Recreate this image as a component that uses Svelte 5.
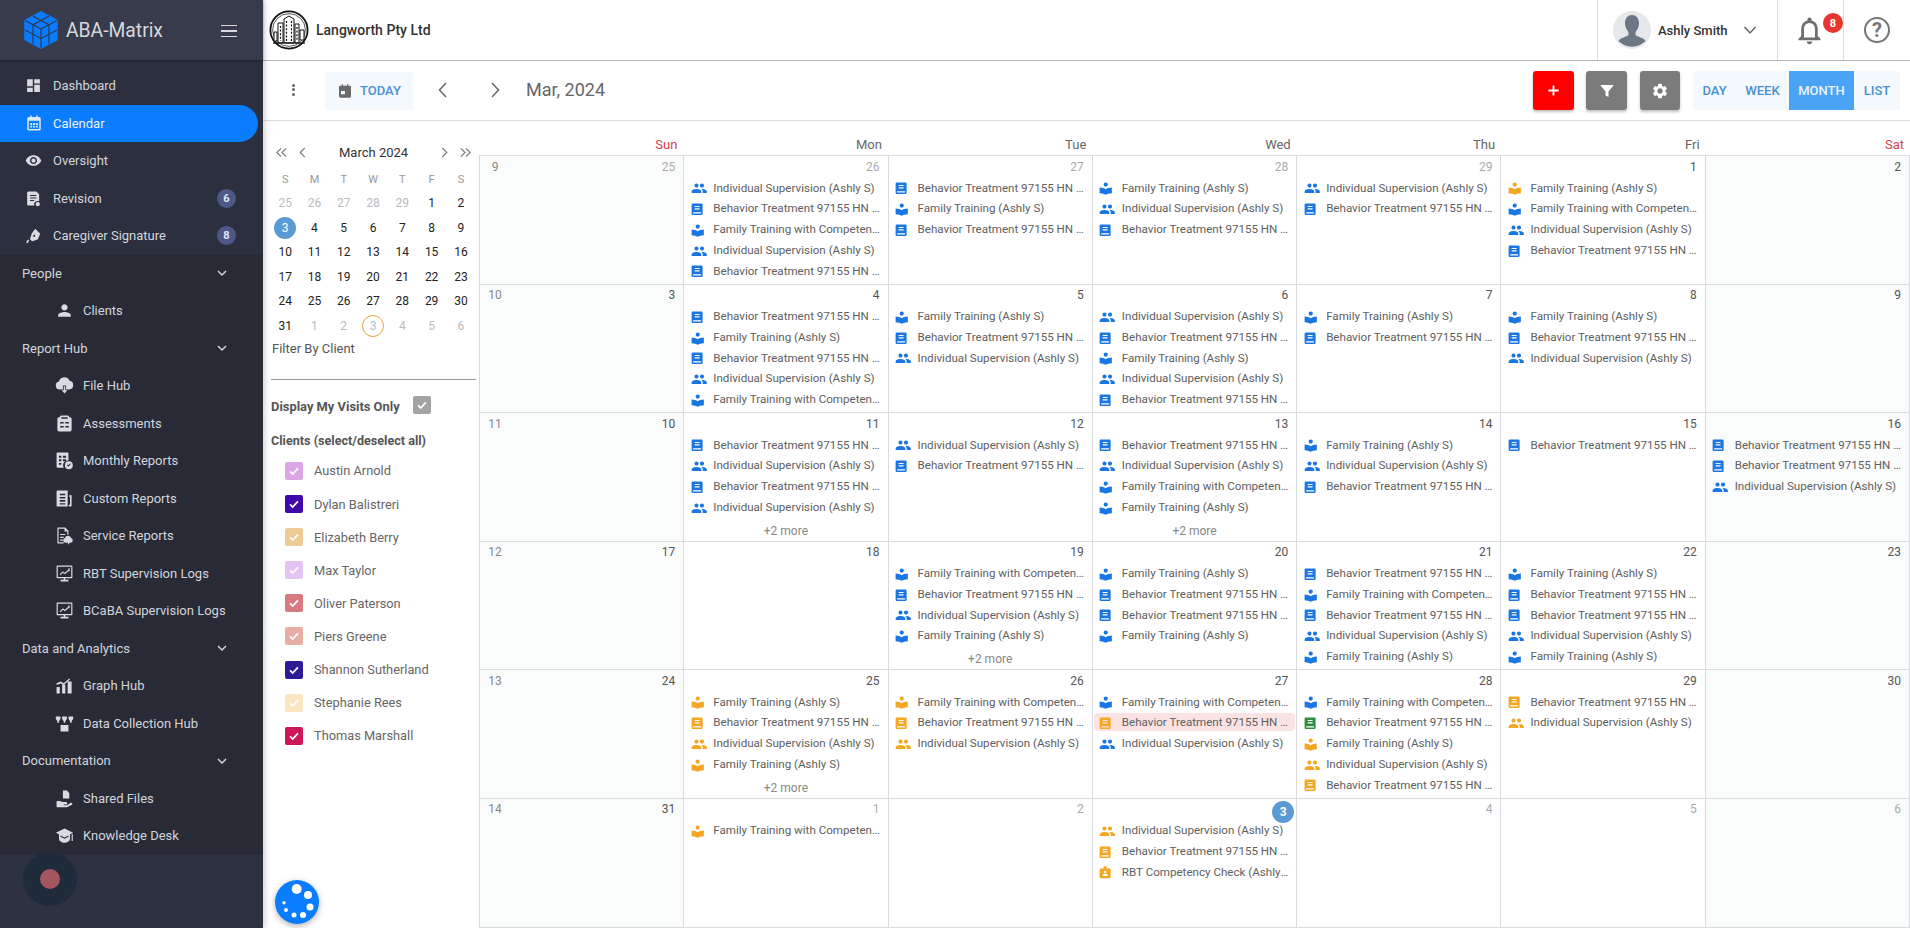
<script>
  const ic = {
    dash: "M3 13h8V3H3v10zm0 8h8v-6H3v6zm10 0h8V11h-8v10zm0-18v6h8V3h-8z",
    cal: "M7 2h2v2h6V2h2v2h2a2 2 0 0 1 2 2v14a2 2 0 0 1-2 2H5a2 2 0 0 1-2-2V6a2 2 0 0 1 2-2h2V2zM5 9v11h14V9H5zm2 3h2.5v2.5H7V12zm3.75 0h2.5v2.5h-2.5V12zm3.75 0H17v2.5h-2.5V12zM7 15.5h2.5V18H7v-2.5zm3.75 0h2.5V18h-2.5v-2.5zm3.75 0H17V18h-2.5v-2.5z",
    today: "M7 2h2v2h6V2h2v2h2a2 2 0 0 1 2 2v14a2 2 0 0 1-2 2H5a2 2 0 0 1-2-2V6a2 2 0 0 1 2-2h2V2zM6 12v5h6v-5H6z",
    eye: "M12 4.5C7 4.5 2.73 7.61 1 12c1.73 4.39 6 7.5 11 7.5s9.27-3.11 11-7.5c-1.73-4.39-6-7.5-11-7.5zM12 17c-2.76 0-5-2.24-5-5s2.24-5 5-5 5 2.24 5 5-2.24 5-5 5zm0-8c-1.66 0-3 1.34-3 3s1.34 3 3 3 3-1.34 3-3-1.34-3-3-3z",
    rev: "M5 2h11l4 4v10a5 5 0 0 0-7 6H5a2 2 0 0 1-2-2V4a2 2 0 0 1 2-2zm2 5v1.5h9V7H7zm0 3.5V12h9v-1.5H7zM7 14v1.5h6V14H7zM18 17a3 3 0 1 1 0 6 3 3 0 0 1 0-6z",
    sign: "M14.500 2.500l7 7-3.500 8-8 2.500-3-3 2.500-8 5-6.500zM13 11a1.500 1.500 0 1 0 .01 3 1.500 1.500 0 0 0-.01-3zM2 22.500c0-2.500 1-3.800 3.200-4.800l1 1c-1.200 1-1.700 1.800-1.700 3.800H2z",
    person: "M12 12c2.21 0 4-1.79 4-4s-1.79-4-4-4-4 1.79-4 4 1.79 4 4 4zm0 2c-2.67 0-8 1.34-8 4v2h16v-2c0-2.66-5.33-4-8-4z",
    cloud: "M6 17a5 5 0 0 1-1-9.9 7 7 0 0 1 13.4-1A5.5 5.5 0 0 1 18 17h-4v-5h-4v5H6zM12 22l-3.5-4H11v-5h2v5h2.5L12 22z",
    clip: "M8 2h8a2 2 0 0 1 2 2h1a2 2 0 0 1 2 2v14a2 2 0 0 1-2 2H5a2 2 0 0 1-2-2V6a2 2 0 0 1 2-2h1a2 2 0 0 1 2-2zm0 2v2h8V4H8zM6.5 10v2H11v-2H6.5zm6.5 0v2h4.5v-2H13zM6.5 15v2H11v-2H6.5zm6.5 0v2h4.5v-2H13z",
    month: "M3 2h13a1 1 0 0 1 1 1v9a6 6 0 0 0-6 9H3a1 1 0 0 1-1-1V3a1 1 0 0 1 1-1zm2 4v2.5h3V6H5zm5 0v2.5h4V6h-4zM5 10.5V13h3v-2.5H5zm5 0V13h4v-2.5h-4zM5 15v2.5h3V15H5zM17.5 13a5 5 0 1 1 0 10 5 5 0 0 1 0-10zm-2.5 5 2 2 3-3.5-1-.8-2 2.4-1-1-1 .9z",
    custom: "M3 2h13v20H3a1 1 0 0 1-1-1V3a1 1 0 0 1 1-1zm3 4v2h7V6H6zm0 4v2h7v-2H6zm0 4v2h7v-2H6zm0 4v1.5h7V18H6zM18 8h3v13a1 1 0 0 1-1 1h-2.5V20H19V10h-1V8z",
    service: "M4 2h9l4 4v5h-1.5V7H12V3.5H4.5v17H11V22H4a1 1 0 0 1-1-1V3a1 1 0 0 1 1-1zm2.5 8H13v1.5H6.5V10zm0 3.5H11V15H6.5v-1.5zm0 3.5H10v1.5H6.5V17zM17 12.5a3.5 3.5 0 0 1 3.4 2.7A3 3 0 0 1 20 21h-2v2h-1.5v-2H13a3 3 0 0 1-.4-5.9 4 4 0 0 1 4.4-2.6z",
    monitor: "M3 2h18a1 1 0 0 1 1 1v14a1 1 0 0 1-1 1h-8v2h4v2H7v-2h4v-2H3a1 1 0 0 1-1-1V3a1 1 0 0 1 1-1zm.5 1.5v13h17v-13h-17zM6 13l4-4 2.5 2L17 7v-1.5h1.5V9H16.8l-4.2 4-2.5-2-3.3 3.2L6 13z",
    graph: "M2 14h4v8H2v-8zm7-3h4v11H9V11zm7-4h5v15h-5V7zM2 9l5-2 4 2 7-6 1 1.5-8 7-4-2-5 2V9z",
    funnel: "M1 3h6v3L5 9v2H3V9L1 6V3zm8 0h6v3l-2 3v2h-2V9L9 6V3zm8 0h6v3l-2 3v2h-2V9l-2-3V3zM7 14h10v8H7v-8z",
    hand: "M10 2h5l3 3v7h-8V2zM2 15h4l4 1.5h4a1.5 1.5 0 0 1 0 3h-3v1h4l5-3a1.5 1.5 0 0 1 1.5 2.5L15 23H2v-8z",
    cap: "M12 3l11 5.5-4 2V16c0 3-3.5 5-7 5s-7-2-7-5v-5.5L1 8.5 12 3zm-5 9v1.5L12 16l5-2.5V12l-5 2.5L7 12zM21 10.5h1.5V19H21z",
    I: "M16 11c1.66 0 2.99-1.34 2.99-3S17.66 5 16 5c-1.66 0-3 1.34-3 3s1.34 3 3 3zm-8 0c1.66 0 2.99-1.34 2.99-3S9.66 5 8 5C6.34 5 5 6.34 5 8s1.34 3 3 3zm0 2c-2.33 0-7 1.17-7 3.5V19h14v-2.5c0-2.33-4.67-3.5-7-3.5zm8 0c-.29 0-.62.02-.97.05 1.16.84 1.97 1.97 1.97 3.45V19h6v-2.5c0-2.33-4.67-3.5-7-3.5z",
    B: "M5 2.500h14a2 2 0 0 1 2 2v15a2 2 0 0 1-2 2H5a2 2 0 0 1-2-2v-15a2 2 0 0 1 2-2zm3 4v2h8v-2H8zm0 4v2h8v-2H8zM5.500 17v2h13v-2h-13z",
    F: "M12 13C9.600 11.400 6.300 10.300 2 10.200V19.500c4.300.1 7.600 1 10 2.500 2.400-1.500 5.700-2.400 10-2.500v-9.300c-4.300.1-7.600 1.200-10 2.800zM12 9a3.500 3.500 0 1 0 0-7 3.500 3.500 0 0 0 0 7z",
    R: "M9.5 2h5v4H19a2 2 0 0 1 2 2v12a2 2 0 0 1-2 2H5a2 2 0 0 1-2-2V8a2 2 0 0 1 2-2h4.5V2zM12 9.5a2 2 0 1 0 0 4 2 2 0 0 0 0-4zM8 15v3h8v-3H8z",
    filter: "M3 4h18l-7 8.5V20l-4-2v-5.5L3 4z",
    gear: "M19.14 12.94c.04-.3.06-.61.06-.94 0-.32-.02-.64-.07-.94l2.03-1.58c.18-.14.23-.41.12-.61l-1.92-3.32c-.12-.22-.37-.29-.59-.22l-2.39.96c-.5-.38-1.03-.7-1.62-.94l-.36-2.54c-.04-.24-.24-.41-.48-.41h-3.84c-.24 0-.43.17-.47.41l-.36 2.54c-.59.24-1.13.57-1.62.94l-2.39-.96c-.22-.08-.47 0-.59.22L2.74 8.87c-.12.21-.08.47.12.61l2.03 1.58c-.05.3-.09.63-.09.94s.02.64.07.94l-2.03 1.58c-.18.14-.23.41-.12.61l1.92 3.32c.12.22.37.29.59.22l2.39-.96c.5.38 1.03.7 1.62.94l.36 2.54c.05.24.24.41.48.41h3.84c.24 0 .44-.17.47-.41l.36-2.54c.59-.24 1.13-.56 1.62-.94l2.39.96c.22.08.47 0 .59-.22l1.92-3.32c.12-.22.07-.47-.12-.61l-2.01-1.58zM12 15.6c-1.98 0-3.6-1.62-3.6-3.6s1.62-3.6 3.6-3.6 3.6 1.62 3.6 3.6-1.62 3.6-3.6 3.6z",
    bell: "M12 22c1.1 0 2-.9 2-2h-4c0 1.1.9 2 2 2zm6-6v-5c0-3.07-1.63-5.64-4.5-6.32V4c0-.83-.67-1.5-1.5-1.5s-1.5.67-1.5 1.5v.68C7.64 5.36 6 7.92 6 11v5l-2 2v1h16v-1l-2-2zm-2 1H8v-6c0-2.48 1.51-4.5 4-4.5s4 2.02 4 4.5v6z"
  };

  const nav = [
    { t: "item", label: "Dashboard", icon: "dash" },
    { t: "item", label: "Calendar", icon: "cal", active: true },
    { t: "item", label: "Oversight", icon: "eye" },
    { t: "item", label: "Revision", icon: "rev", badge: 6 },
    { t: "item", label: "Caregiver Signature", icon: "sign", badge: 8 }
  ];
  const nav2 = [
    { t: "group", label: "People" },
    { t: "sub", label: "Clients", icon: "person" },
    { t: "group", label: "Report Hub" },
    { t: "sub", label: "File Hub", icon: "cloud" },
    { t: "sub", label: "Assessments", icon: "clip" },
    { t: "sub", label: "Monthly Reports", icon: "month" },
    { t: "sub", label: "Custom Reports", icon: "custom" },
    { t: "sub", label: "Service Reports", icon: "service" },
    { t: "sub", label: "RBT Supervision Logs", icon: "monitor" },
    { t: "sub", label: "BCaBA Supervision Logs", icon: "monitor" },
    { t: "group", label: "Data and Analytics" },
    { t: "sub", label: "Graph Hub", icon: "graph" },
    { t: "sub", label: "Data Collection Hub", icon: "funnel" },
    { t: "group", label: "Documentation" },
    { t: "sub", label: "Shared Files", icon: "hand" },
    { t: "sub", label: "Knowledge Desk", icon: "cap" }
  ];

  const miniDays = [
    ["25", "26", "27", "28", "29", "1", "2"],
    ["3", "4", "5", "6", "7", "8", "9"],
    ["10", "11", "12", "13", "14", "15", "16"],
    ["17", "18", "19", "20", "21", "22", "23"],
    ["24", "25", "26", "27", "28", "29", "30"],
    ["31", "1", "2", "3", "4", "5", "6"]
  ].flatMap((row, r) =>
    row.map((d, c) => ({
      d,
      muted: (r === 0 && c < 5) || (r === 5 && c > 0),
      today: r === 1 && c === 0,
      ring: r === 5 && c === 3
    }))
  );

  const clients = [
    ["Austin Arnold", "#dba6e4"],
    ["Dylan Balistreri", "#3f08a8"],
    ["Elizabeth Berry", "#eecb94"],
    ["Max Taylor", "#e4c4f3"],
    ["Oliver Paterson", "#d97a82"],
    ["Piers Greene", "#e8aea4"],
    ["Shannon Sutherland", "#2d1a96"],
    ["Stephanie Rees", "#fbe6c4"],
    ["Thomas Marshall", "#cf1657"]
  ];

  const titles = {
    I: "Individual Supervision (Ashly S)",
    B: "Behavior Treatment 97155 HN (Ashly S)",
    F: "Family Training (Ashly S)",
    C: "Family Training with Competency Check (Ashly S)",
    R: "RBT Competency Check (Ashly S)"
  };
  const tone = { o: "#f5a623", g: "#2e8b3f" };
  const boxes = { I: "0 0 24 24", B: "2 -1.500 27 27", F: "1 -2 27 27", R: "2 -1.500 27 27" };

  function ev(code) {
    const k = code[0];
    const icon = k === "C" ? "F" : k;
    return {
      icon,
      box: boxes[icon],
      title: titles[k],
      color: tone[code[1]] || "#1a76e3",
      hl: code[2] === "h"
    };
  }

  const weekNums = [9, 10, 11, 12, 13, 14];
  const raw = [
    [["25", 1, ""], ["26", 1, "I B C I B"], ["27", 1, "B F B"], ["28", 1, "F I B"], ["29", 1, "I B"], ["1", 0, "Fo C I B"], ["2", 0, ""]],
    [["3", 0, ""], ["4", 0, "B F B I C"], ["5", 0, "F B I"], ["6", 0, "I B F I B"], ["7", 0, "F B"], ["8", 0, "F B I"], ["9", 0, ""]],
    [["10", 0, ""], ["11", 0, "B I B I", 2], ["12", 0, "I B"], ["13", 0, "B I C F", 2], ["14", 0, "F I B"], ["15", 0, "B"], ["16", 0, "B B I"]],
    [["17", 0, ""], ["18", 0, ""], ["19", 0, "C B I F", 2], ["20", 0, "F B B F"], ["21", 0, "B C B I F"], ["22", 0, "F B B I F"], ["23", 0, ""]],
    [["24", 0, ""], ["25", 0, "Fo Bo Io Fo", 2], ["26", 0, "Co Bo Io"], ["27", 0, "C Boh I"], ["28", 0, "C Bg Fo Io Bo"], ["29", 0, "Bo Io"], ["30", 0, ""]],
    [["31", 0, ""], ["1", 1, "Co"], ["2", 1, ""], ["3", 2, "Io Bo Ro"], ["4", 1, ""], ["5", 1, ""], ["6", 1, ""]]
  ];
  const cells = raw.flatMap((row, r) =>
    row.map((c, i) => ({
      d: c[0],
      muted: c[1] === 1,
      today: c[1] === 2,
      week: i === 0 ? weekNums[r] : null,
      weekend: i === 0 || i === 6,
      events: c[2] ? c[2].split(" ").map(ev) : [],
      more: c[3] || 0
    }))
  );
  const heads = ["Sun", "Mon", "Tue", "Wed", "Thu", "Fri", "Sat"];
</script>

<div class="app">
  <aside class="side">
    <div class="brand">
      <svg class="cube" viewBox="0 0 34 38" aria-hidden="true">
        <path d="M17 1l16 8.5v19L17 37 1 28.5v-19z" fill="#0a7cff" stroke="#0a7cff" stroke-width="1.5" stroke-linejoin="round" />
        <path d="M9 5.25l16 8.5M25 5.25l-16 8.5M1 9.5L17 18l16-8.5M17 18v19M1 19l16 8.5L33 19M9 13.75v19M25 13.75v19" fill="none" stroke="#2f3445" stroke-width="1.1" />
      </svg>
      <span class="brandname">ABA-Matrix</span>
      <span class="burger"><i></i><i></i><i></i></span>
    </div>
    <nav class="nav">
      {#each nav as n}
        <div class="row item" class:active={n.active}>
          <svg class="nicon" viewBox="0 0 24 24"><path d={ic[n.icon]} fill-rule="evenodd" /></svg>
          <span class="lbl">{n.label}</span>
          {#if n.badge}<span class="nbadge">{n.badge}</span>{/if}
        </div>
      {/each}
      <div class="dark">
        {#each nav2 as n}
          {#if n.t === "group"}
            <div class="row group">
              <span class="lbl">{n.label}</span>
              <svg class="gchev" viewBox="0 0 12 12"><path d="M2 4l4 4 4-4" /></svg>
            </div>
          {:else}
            <div class="row sub">
              <svg class="nicon" viewBox="0 0 24 24"><path d={ic[n.icon]} fill-rule="evenodd" /></svg>
              <span class="lbl">{n.label}</span>
            </div>
          {/if}
        {/each}
      </div>
    </nav>
  </aside>

  <div class="main">
    <header class="top">
      <svg class="orglogo" viewBox="0 0 40 40" aria-hidden="true">
        <circle cx="20" cy="20" r="18.6" fill="#fff" stroke="#111" stroke-width="1.8" />
        <circle cx="20" cy="20" r="16.4" fill="none" stroke="#111" stroke-width=".7" />
        <path d="M15 9l5-3 5 3v24H15zM9 13h5v20H9zM26 14h4v19h-4zM5 22h3v9H5zM31 20h4v10h-4z" fill="#fff" stroke="#111" stroke-width="1" />
        <path d="M17.5 11v20M22.5 11v20M11.5 16v15M28 17v14" fill="none" stroke="#111" stroke-width="1.2" stroke-dasharray="2 1.6" />
        <path d="M4 33h32" stroke="#111" stroke-width="1.2" />
      </svg>
      <span class="org">Langworth Pty Ltd</span>
      <div class="tblock user">
        <svg class="avatar" viewBox="0 0 38 38" aria-hidden="true">
          <circle cx="19" cy="19" r="19" fill="#e6e8eb" />
          <path d="M12 12c0-5 3-8 7-8s7 3 7 8c0 4-1.5 7-3.5 9v3c2 2 8 2.500 10 6a19 19 0 0 1-27 0c2-3.500 8-4 10-6v-3c-2-2-3.500-5-3.500-9z" fill="#6c7684" />
        </svg>
        <span class="uname">Ashly Smith</span>
        <svg class="uchev" viewBox="0 0 14 14"><path d="M1.500 4l5.500 6 5.500-6" /></svg>
      </div>
      <div class="tblock bell">
        <svg viewBox="0 0 24 24"><path d={ic.bell} /></svg>
        <span class="bbadge">8</span>
      </div>
      <div class="tblock help"><span class="q">?</span></div>
    </header>

    <div class="toolbar">
      <span class="dots"><i></i><i></i><i></i></span>
      <button class="todaybtn">
        <svg viewBox="0 0 24 24"><path d={ic.today} fill-rule="evenodd" /></svg>
        TODAY
      </button>
      <svg class="tchev prev" viewBox="0 0 14 20"><path d="M10 3L3.500 10l6.500 7" /></svg>
      <svg class="tchev next" viewBox="0 0 14 20"><path d="M4 3l6.500 7L4 17" /></svg>
      <span class="title">Mar, 2024</span>
      <button class="sq red"><svg viewBox="0 0 14 14"><path d="M7 1.500v11M1.500 7h11" /></svg></button>
      <button class="sq gray g1"><svg viewBox="0 0 24 24" class="solid"><path d={ic.filter} /></svg></button>
      <button class="sq gray g2"><svg viewBox="0 0 24 24" class="solid"><path d={ic.gear} /></svg></button>
      <div class="seg">
        <span class="s1">DAY</span><span class="s2">WEEK</span><span class="s3">MONTH</span><span class="s4">LIST</span>
      </div>
    </div>

    <div class="body">
      <section class="panel">
        <div class="mhead">
          <svg viewBox="0 0 14 14" class="m1"><path d="M6.500 2.500L2 7l4.500 4.500M12 2.500L7.500 7l4.500 4.500" /></svg>
          <svg viewBox="0 0 14 14" class="m2"><path d="M9.500 2L4.500 7l5 5" /></svg>
          <span class="mtitle">March 2024</span>
          <svg viewBox="0 0 14 14" class="m3"><path d="M4.500 2l5 5-5 5" /></svg>
          <svg viewBox="0 0 14 14" class="m4"><path d="M2 2.500L6.500 7 2 11.500M7.500 2.500L12 7l-4.500 4.500" /></svg>
        </div>
        <div class="mgrid">
          {#each ["S", "M", "T", "W", "T", "F", "S"] as h}<span class="mwd">{h}</span>{/each}
          {#each miniDays as m}
            <span class="md" class:mmuted={m.muted} class:mtoday={m.today} class:mring={m.ring}>{m.d}</span>
          {/each}
        </div>
        <div class="fbc">Filter By Client</div>
        <hr class="rule" />
        <div class="mine">
          <span>Display My Visits Only</span>
          <span class="cb minecb"><svg viewBox="0 0 16 16"><path d="M3.500 8.500l3 3 6-6.500" /></svg></span>
        </div>
        <div class="clhead">Clients (select/deselect all)</div>
        <div class="cllist">
          {#each clients as c}
            <div class="cl">
              <span class="cb" style="background:{c[1]}"><svg viewBox="0 0 16 16"><path d="M3.500 8.500l3 3 6-6.500" /></svg></span>
              <span>{c[0]}</span>
            </div>
          {/each}
        </div>
      </section>

      <section class="cal">
        <div class="wdhead">
          {#each heads as h, i}<span class:wk={i === 0 || i === 6}>{h}</span>{/each}
        </div>
        <div class="grid">
          {#each cells as c}
            <div class="cell" class:weekend={c.weekend}>
              <div class="ctop">
                {#if c.week}<span class="wnum">{c.week}</span>{/if}
                <span class="dnum" class:dmuted={c.muted} class:dtoday={c.today}>{c.d}</span>
              </div>
              {#each c.events as e}
                <div class="ev" class:hl={e.hl}>
                  <svg viewBox={e.box} style="fill:{e.color}"><path d={ic[e.icon]} fill-rule="evenodd" /></svg>
                  <span class="evt">{e.title}</span>
                </div>
              {/each}
              {#if c.more}<div class="more">+{c.more} more</div>{/if}
            </div>
          {/each}
        </div>
      </section>
    </div>
  </div>

  <div class="foot"></div>
  <div class="rec"><i></i></div>
  <svg class="loader" viewBox="0 0 44 44" aria-hidden="true">
    <circle cx="22" cy="22" r="22" fill="#0a7cff" />
    <g fill="#fff">
      <circle cx="21.700" cy="9" r="5" /><circle cx="33" cy="15" r="4" /><circle cx="35" cy="27" r="3.500" />
      <circle cx="28" cy="35" r="3" /><circle cx="19" cy="35" r="2.500" /><circle cx="11" cy="30" r="2" /><circle cx="9" cy="22.700" r="1.700" />
    </g>
  </svg>
</div>

<style>
  :global(body) { margin: 0; font-family: Roboto, "Liberation Sans", sans-serif; background: #fff; }
  .app { position: relative; display: flex; width: 1910px; height: 928px; overflow: hidden; font-size: 13px; }
  svg { display: block; flex: none; }

  /* sidebar */
  .side { width: 263px; flex: none; background: #2c2f3d; box-shadow: 2px 0 6px rgba(0, 0, 0, .18); z-index: 3; display: flex; flex-direction: column; }
  .brand { height: 60px; flex: none; background: #383b4b; display: flex; align-items: center; padding-left: 24px; box-sizing: border-box; box-shadow: 0 1px 2px rgba(0, 0, 0, .35); }
  .cube { width: 34px; height: 38px; }
  .brandname { margin-left: 8px; font-size: 19.300px; color: #d6d8de; width: 155px; flex: none; white-space: nowrap; }
  .burger { display: flex; flex-direction: column; gap: 4px; width: 16px; margin-top: 2px; }
  .burger i { display: block; height: 1.500px; background: #d6d8de; }
  .nav { padding-top: 7px; flex: 1; display: flex; flex-direction: column; }
  .row { height: 37.500px; display: flex; align-items: center; color: #d3d5dc; box-sizing: border-box; }
  .nicon { fill: #d9dbe1; width: 17px; height: 17px; }
  .item { padding-left: 25px; width: 258px; }
  .item .lbl { margin-left: 11px; }
  .item.active { background: #0a7cff; color: #e9f2ff; border-radius: 0 19px 19px 0; }
  .item.active .nicon { width: 18px; height: 18px; fill: #dcebff; margin-right: -1px; }
  .nbadge { margin-left: auto; margin-right: 22px; width: 19px; height: 19px; border-radius: 50%; background: #4d5889; color: #e4e7f2; font-size: 11px; font-weight: 700; display: flex; align-items: center; justify-content: center; }
  .dark { background: #282b36; flex: none; }
  .group { padding-left: 22px; }
  .gchev { margin-left: auto; margin-right: 35px; width: 12px; height: 12px; fill: none; stroke: #d3d5dc; stroke-width: 1.500; }
  .sub { padding-left: 55px; }
  .sub .nicon { width: 19px; height: 19px; }
  .sub .lbl { margin-left: 9px; }
  .foot { position: absolute; left: 0; top: 855px; width: 263px; height: 73px; background: #2e3140; z-index: 3; }
  .rec { position: absolute; left: 23px; top: 852px; width: 54px; height: 54px; border-radius: 50%; background: #1f2a3a; z-index: 4; display: flex; align-items: center; justify-content: center; }
  .rec i { width: 20px; height: 20px; border-radius: 50%; background: #a5555f; }
  .loader { position: absolute; left: 275px; top: 880px; width: 44px; height: 44px; z-index: 4; filter: drop-shadow(0 2px 3px rgba(0, 0, 0, .3)); }

  /* top */
  .main { flex: 1; min-width: 0; display: flex; flex-direction: column; }
  .top { height: 60px; flex: none; border-bottom: 1px solid #b9b9b9; display: flex; align-items: center; padding-left: 6px; background: #fff; }
  .orglogo { width: 40px; height: 40px; }
  .org { margin-left: 7px; font-size: 14px; font-weight: 500; color: #333; flex: 1; }
  .tblock { height: 60px; display: flex; align-items: center; border-left: 1px solid #ddd; box-sizing: border-box; position: relative; }
  .user { width: 180px; padding-left: 15px; }
  .avatar { width: 38px; height: 38px; }
  .uname { margin-left: 7px; font-weight: 500; color: #333; width: 85px; flex: none; }
  .uchev { width: 14px; height: 14px; fill: none; stroke: #666; stroke-width: 1.500; }
  .bell { width: 66px; justify-content: center; }
  .bell svg { width: 33px; height: 33px; fill: #6e6e6e; margin-left: -2px; }
  .bbadge { position: absolute; left: 45px; top: 13px; width: 20px; height: 20px; border-radius: 50%; background: #e8352e; color: #fff; font-size: 11px; font-weight: 700; display: flex; align-items: center; justify-content: center; }
  .help { width: 67px; padding-left: 20px; }
  .q { width: 22px; height: 22px; border: 2.500px solid #777; border-radius: 50%; color: #777; font-weight: 700; font-size: 20px; display: flex; align-items: center; justify-content: center; }

  /* toolbar */
  .toolbar { height: 59px; flex: none; border-bottom: 1px solid #ddd; display: flex; align-items: center; padding-left: 29px; padding-right: 10px; background: #fff; }
  button { border: 0; padding: 0; font-family: inherit; }
  .dots { display: flex; flex-direction: column; gap: 1.500px; width: 3px; margin-bottom: 2px; }
  .dots i { width: 3px; height: 3px; border-radius: 50%; background: #666; }
  .todaybtn { margin-left: 30px; width: 88px; height: 38px; background: #f4f9fd; color: #4a90d2; font-size: 13px; font-weight: 500; display: flex; align-items: center; padding-left: 12px; gap: 7px; box-sizing: border-box; }
  .todaybtn svg { width: 16px; height: 16px; fill: #6a6a6a; }
  .tchev { width: 14px; height: 20px; fill: none; stroke: #666; stroke-width: 1.500; margin-bottom: 2px; }
  .prev { margin-left: 23px; }
  .next { margin-left: 38px; }
  .title { margin-left: 24px; font-size: 18px; color: #666; margin-bottom: 2px; }
  .sq { width: 41px; height: 39px; border-radius: 3px; display: flex; align-items: center; justify-content: center; box-shadow: 0 2px 3px rgba(0, 0, 0, .25); }
  .sq svg { width: 13px; height: 13px; fill: none; stroke: #fff; stroke-width: 2; }
  .sq svg.solid { width: 18px; height: 18px; fill: #fff; stroke: none; }
  .red { background: #f00; margin-left: auto; }
  .gray { background: #7b7b7b; }
  .g1 { margin-left: 12px; }
  .g2 { margin-left: 13px; width: 40px; }
  .seg { margin-left: 13px; height: 39px; display: flex; background: #f4f9fd; color: #4a90d2; font-weight: 500; }
  .seg span { display: flex; align-items: center; justify-content: center; }
  .s1 { width: 43px; } .s2 { width: 53px; } .s4 { width: 46px; }
  .s3 { width: 65px; background: #4aa3f5; color: #eaf4fe; }

  /* body */
  .body { flex: 1; min-height: 0; display: flex; }
  .panel { width: 216px; flex: none; padding: 20px 3px 0 8px; box-sizing: border-box; color: #555; }
  .mhead { height: 22px; display: flex; align-items: center; color: #333; }
  .mhead svg { width: 13px; height: 13px; fill: none; stroke: #777; stroke-width: 1.200; }
  .m1 { margin-left: 4px; } .m2 { margin-left: 8px; }
  .m3 { margin-left: auto; } .m4 { margin-left: 8px; margin-right: 4px; }
  .mtitle { margin-left: 30px; width: 69px; white-space: nowrap; }
  .mgrid { margin-top: 4.750px; display: grid; grid-template-columns: repeat(7, 29.300px); grid-template-rows: 23px; grid-auto-rows: 24.500px; margin-left: -.5px; }
  .mwd, .md { display: flex; align-items: center; justify-content: center; font-size: 12px; }
  .mwd { color: #999; font-size: 11px; }
  .md { color: #222; position: relative; z-index: 0; }
  .mmuted { color: #bbb; }
  .mtoday { color: #fff; }
  .mtoday::before, .mring::before { content: ""; position: absolute; left: 50%; top: 50%; width: 22px; height: 22px; margin: -11px 0 0 -11px; border-radius: 50%; z-index: -1; box-sizing: border-box; }
  .mtoday::before { background: #5b9bd5; }
  .mring { color: #a9bfd8; }
  .mring::before { border: 1px solid #e8a33d; }
  .fbc { height: 16px; line-height: 16px; color: #555; margin: 3px 0 0 1px; }
  .rule { margin: 22px 0 0; border: 0; border-top: 1px solid #999; }
  .mine { margin-top: 18px; height: 18px; display: flex; align-items: center; font-size: 12.900px; font-weight: 700; color: #555; }
  .cb { width: 18px; height: 18px; border-radius: 2px; display: flex; align-items: center; justify-content: center; flex: none; }
  .cb svg { width: 14px; height: 14px; fill: none; stroke: #fff; stroke-width: 2; }
  .minecb { background: #a3a3a3; margin-left: 13px; margin-top: -3px; }
  .clhead { margin-top: 17px; height: 16px; line-height: 16px; font-size: 12.600px; font-weight: 700; color: #555; }
  .cllist { margin-top: 5.700px; }
  .cl { height: 33.100px; display: flex; align-items: center; padding-left: 14px; gap: 11px; color: #666; font-size: 12.800px; }

  /* calendar */
  .cal { flex: 1; min-width: 0; display: flex; flex-direction: column; }
  .wdhead { height: 34px; flex: none; display: grid; grid-template-columns: repeat(7, 1fr); align-items: center; text-align: right; color: #666; padding-top: 12px; box-sizing: border-box; }
  .wdhead span { padding-right: 6px; }
  .wdhead .wk { color: #d0454c; }
  .grid { height: 773px; flex: none; display: grid; grid-template-columns: repeat(7, 1fr); grid-template-rows: repeat(6, 1fr); border-top: 1px solid #d8dadd; border-left: 1px solid #d8dadd; border-bottom: 1px solid #d8dadd; box-sizing: border-box; }
  .cell { border-right: 1px solid #d8dadd; border-bottom: 1px solid #d8dadd; min-width: 0; min-height: 0; overflow: hidden; box-sizing: border-box; }
  .cell:nth-last-child(-n+7) { border-bottom: 0; }
  .weekend { background: #fafbfb; }
  .ctop { height: 22.500px; display: flex; align-items: center; padding: 0 8px 1.500px 7px; font-size: 12px; color: #555; box-sizing: border-box; }
  .wnum { width: 16px; text-align: center; color: #888; }
  .dnum { margin-left: auto; }
  .dmuted { color: #aaa; }
  .dtoday { width: 22px; height: 22px; border-radius: 50%; background: #5b9bd5; color: #fff; font-weight: 700; display: flex; align-items: center; justify-content: center; margin-right: -6px; position: relative; top: 2.500px; }
  .ev { height: 18px; margin: 0 1px 2.750px 1px; padding: 0 6px 0 5.500px; display: flex; align-items: center; gap: 6px; border-radius: 4px; font-size: 11.600px; color: #606060; }
  .ev svg { width: 16.500px; height: 16.500px; margin-top: 2px; }
  .hl { background: #fbe3e3; }
  .evt { white-space: nowrap; overflow: hidden; text-overflow: ellipsis; min-width: 0; flex: 1; }
  .more { text-align: center; font-size: 12px; color: #888; margin-top: 8px; }
</style>
